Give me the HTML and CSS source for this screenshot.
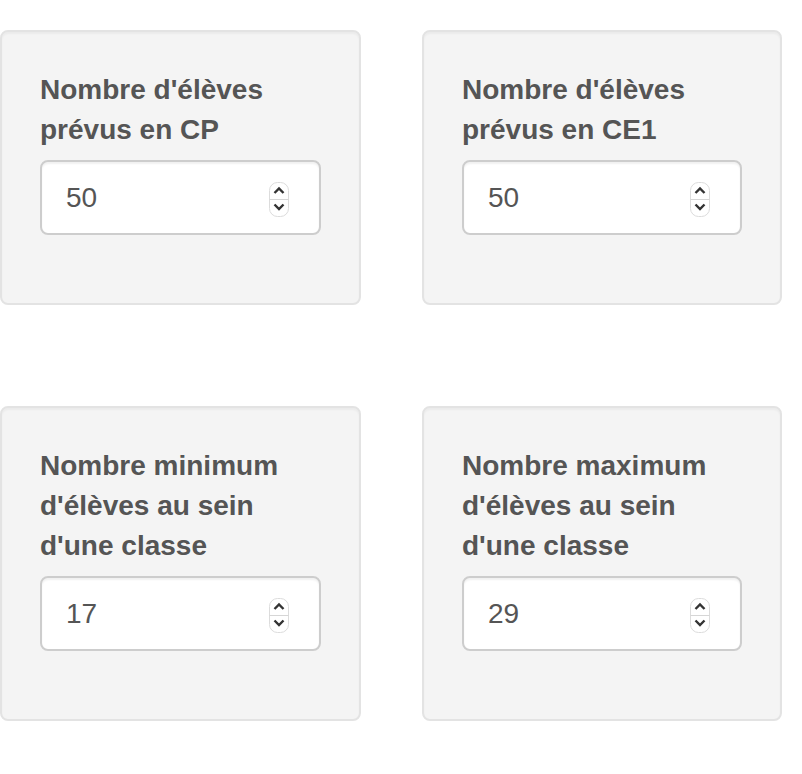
FILE: index.html
```html
<!DOCTYPE html>
<html lang="fr">
<head>
    <meta charset="UTF-8">
    <meta name="viewport" content="width=device-width, initial-scale=1.0">
    <title>Effectifs</title>
    <link rel="stylesheet" href="styles.css">
</head>
<body>
    <div class="page">
        <!-- Ligne 1 -->
        <div class="row row-first">
            <div class="well">
                <label class="control-label" for="nbCP">Nombre d'élèves prévus en CP</label>
                <div class="num-input">
                    <input id="nbCP" type="text" value="50">
                    <svg class="spinner" width="20" height="35" viewBox="0 0 20 35">
                        <rect x="0.5" y="0.5" width="19" height="34" rx="8" fill="#fff" stroke="#dcdcdc"/>
                        <line x1="0.5" y1="17.5" x2="19.5" y2="17.5" stroke="#d6d6d6"/>
                        <path d="M5.5 11 L10 6.5 L14.5 11" fill="none" stroke="#333" stroke-width="2.4"/>
                        <path d="M5.5 22.5 L10 27 L14.5 22.5" fill="none" stroke="#333" stroke-width="2.4"/>
                    </svg>
                </div>
            </div>
            <div class="well">
                <label class="control-label" for="nbCE1">Nombre d'élèves prévus en CE1</label>
                <div class="num-input">
                    <input id="nbCE1" type="text" value="50">
                    <svg class="spinner" width="20" height="35" viewBox="0 0 20 35">
                        <rect x="0.5" y="0.5" width="19" height="34" rx="8" fill="#fff" stroke="#dcdcdc"/>
                        <line x1="0.5" y1="17.5" x2="19.5" y2="17.5" stroke="#d6d6d6"/>
                        <path d="M5.5 11 L10 6.5 L14.5 11" fill="none" stroke="#333" stroke-width="2.4"/>
                        <path d="M5.5 22.5 L10 27 L14.5 22.5" fill="none" stroke="#333" stroke-width="2.4"/>
                    </svg>
                </div>
            </div>
        </div>

        <!-- Ligne 2 -->
        <div class="row">
            <div class="well">
                <label class="control-label" for="nbMin">Nombre minimum d'élèves au sein d'une classe</label>
                <div class="num-input">
                    <input id="nbMin" type="text" value="17">
                    <svg class="spinner" width="20" height="35" viewBox="0 0 20 35">
                        <rect x="0.5" y="0.5" width="19" height="34" rx="8" fill="#fff" stroke="#dcdcdc"/>
                        <line x1="0.5" y1="17.5" x2="19.5" y2="17.5" stroke="#d6d6d6"/>
                        <path d="M5.5 11 L10 6.5 L14.5 11" fill="none" stroke="#333" stroke-width="2.4"/>
                        <path d="M5.5 22.5 L10 27 L14.5 22.5" fill="none" stroke="#333" stroke-width="2.4"/>
                    </svg>
                </div>
            </div>
            <div class="well">
                <label class="control-label" for="nbMax">Nombre maximum d'élèves au sein d'une classe</label>
                <div class="num-input">
                    <input id="nbMax" type="text" value="29">
                    <svg class="spinner" width="20" height="35" viewBox="0 0 20 35">
                        <rect x="0.5" y="0.5" width="19" height="34" rx="8" fill="#fff" stroke="#dcdcdc"/>
                        <line x1="0.5" y1="17.5" x2="19.5" y2="17.5" stroke="#d6d6d6"/>
                        <path d="M5.5 11 L10 6.5 L14.5 11" fill="none" stroke="#333" stroke-width="2.4"/>
                        <path d="M5.5 22.5 L10 27 L14.5 22.5" fill="none" stroke="#333" stroke-width="2.4"/>
                    </svg>
                </div>
            </div>
        </div>
    </div>
</body>
</html>
```

FILE: styles.css
```css
/* General */
* {
    box-sizing: border-box;
}

html, body {
    margin: 0;
    background: #fff;
    font-family: "Liberation Sans", Arial, sans-serif;
    color: #555;
}

.page {
    padding-top: 30px;
}

/* Rows of wells */
.row {
    display: grid;
    grid-template-columns: 361px 360px;
    column-gap: 61px;
}

.row-first {
    margin-bottom: 101px;
}

/* Well */
.well {
    display: flex;
    flex-direction: column;
    padding: 38px 38px 68px;
    background-color: #f4f4f4;
    border: 2px solid #e3e3e3;
    border-radius: 8px;
    box-shadow: inset 0 2px 2px rgba(0, 0, 0, 0.04);
}

.control-label {
    font-size: 28px;
    font-weight: bold;
    line-height: 40px;
    margin-bottom: 10px;
    color: #555;
}

/* Number input */
.num-input {
    display: flex;
    align-items: center;
    height: 75px;
    padding: 0 30px 0 24px;
    background: #fff;
    border: 2px solid #cdcdcd;
    border-radius: 8px;
    box-shadow: inset 0 2px 2px rgba(0, 0, 0, 0.06);
}

.num-input input {
    flex: 1;
    min-width: 0;
    border: none;
    outline: none;
    padding: 0;
    background: transparent;
    font-family: "Liberation Sans", Arial, sans-serif;
    font-size: 28px;
    color: #555;
}

.spinner {
    flex: none;
    margin-top: 4px;
}
```
